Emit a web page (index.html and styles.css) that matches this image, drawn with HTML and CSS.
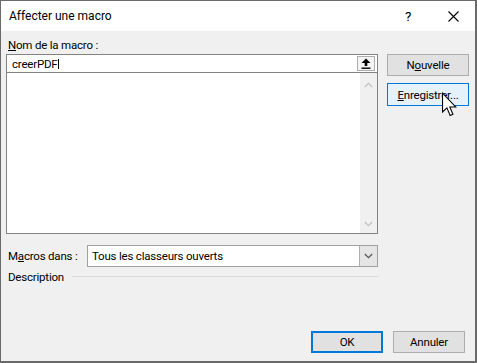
FILE: index.html
```html
<!DOCTYPE html>
<html lang="fr">
<head>
<meta charset="utf-8">
<title>Affecter une macro</title>
<link rel="stylesheet" href="styles.css">
</head>
<body>
<div class="window">
  <div class="titlebar">
    <span class="title">Affecter une macro</span>
    <span class="help">?</span>
    <span class="close">
      <svg width="11" height="11" viewBox="0 0 11 11"><path d="M0.5 0.5 L10.5 10.5 M10.5 0.5 L0.5 10.5" stroke="#000" stroke-width="1.1" fill="none"/></svg>
    </span>
  </div>
  <div class="content">
    <div class="main">
      <div class="left">
        <div class="label"><u>N</u>om de la macro :</div>
        <div class="namebox">
          <div class="input">
            <span class="value">creerPDF</span><span class="caret"></span>
            <span class="upbtn">
              <svg width="10" height="11" viewBox="0 0 10 11"><path d="M5 0.5 L9.5 5 L6.3 5 L6.3 8 L3.7 8 L3.7 5 L0.5 5 Z" fill="#000"/><rect x="0.5" y="9.5" width="9" height="1.4" fill="#000"/></svg>
            </span>
          </div>
          <div class="list">
            <div class="list-area"></div>
            <div class="vscroll">
              <svg width="9" height="6" viewBox="0 0 9 6"><path d="M0.8 5 L4.5 1.3 L8.2 5" stroke="#c2c2c2" stroke-width="1.3" fill="none"/></svg>
              <svg width="9" height="6" viewBox="0 0 9 6"><path d="M0.8 1 L4.5 4.7 L8.2 1" stroke="#c2c2c2" stroke-width="1.3" fill="none"/></svg>
            </div>
          </div>
        </div>
        <div class="macros-row">
          <span class="row-label">M<u>a</u>cros dans :</span>
          <div class="combo">
            <span class="combo-text">Tous les classeurs ouverts</span>
            <span class="drop">
              <svg width="9" height="6" viewBox="0 0 9 6"><path d="M0.8 1 L4.5 4.7 L8.2 1" stroke="#555" stroke-width="1.2" fill="none"/></svg>
            </span>
          </div>
        </div>
        <div class="desc-row">
          <span>Description</span><span class="rule"></span>
        </div>
      </div>
      <div class="right">
        <button class="btn side">N<u>o</u>uvelle</button>
        <button class="btn side hover"><u>E</u>nregistrer...</button>
      </div>
    </div>
    <div class="footer">
      <button class="btn foot default">OK</button>
      <button class="btn foot">Annuler</button>
    </div>
  </div>
  <svg class="cursor" width="15" height="26" viewBox="0 0 14 23">
    <path d="M0.5 0.5 L0.5 18 L4.6 14.2 L7.6 21.3 L10.2 20.2 L7.3 13.3 L12.8 13.3 Z" fill="#fff" stroke="#000" stroke-width="1" stroke-linejoin="miter"/>
  </svg>
</div>
</body>
</html>
```
FILE: styles.css
```css
* { box-sizing: border-box; }
html, body { margin: 0; padding: 0; }
body {
  font-family: Roboto, "Noto Sans", "Liberation Sans", sans-serif;
  font-size: 11.5px;
  letter-spacing: -0.2px;
  color: #000;
  background: #f0f0f0;
}
.window {
  position: relative;
  width: 477px;
  height: 363px;
  border-style: solid;
  border-color: #6a6a6a;
  border-width: 1px 2px 2px 1px;
  display: flex;
  flex-direction: column;
  background: #f0f0f0;
  overflow: hidden;
}
.titlebar {
  height: 30px;
  flex: none;
  background: #fff;
  display: flex;
  align-items: center;
  padding-left: 8px;
}
.title { flex: 1; font-size: 12px; letter-spacing: 0; }
.help { width: 43px; text-align: left; font-size: 13.5px; }
.close { width: 27px; display: flex; align-items: center; padding-top: 1px; }
.content {
  flex: 1;
  display: flex;
  flex-direction: column;
  padding: 6px 6px 8px 5px;
}
.main { display: flex; gap: 9px; }
.left { width: 372px; display: flex; flex-direction: column; }
.label { height: 17px; line-height: 16px; padding-left: 2px; }
.namebox {
  border: 1px solid #828282;
  background: #fff;
  height: 180px;
  display: flex;
  flex-direction: column;
}
.input {
  height: 18px;
  border-bottom: 1px solid #828282;
  display: flex;
  align-items: center;
  padding-left: 5px;
  position: relative;
}
.value { line-height: 16px; }
.caret { width: 1px; height: 10px; background: #000; margin-left: 1px; }
.upbtn {
  margin-left: auto;
  margin-right: 2px;
  width: 18px;
  height: 15px;
  border: 1px solid #adadad;
  background: #f4f4f4;
  display: flex;
  align-items: center;
  justify-content: center;
}
.list { flex: 1; display: flex; }
.list-area { flex: 1; }
.vscroll {
  width: 17px;
  background: #f0f0f0;
  display: flex;
  flex-direction: column;
  justify-content: space-between;
  align-items: center;
  padding: 9px 0 6px;
}
.macros-row {
  margin-top: 11px;
  display: flex;
  align-items: center;
}
.row-label { width: 81px; padding-left: 2px; }
.combo {
  flex: 1;
  height: 22px;
  border: 1px solid #a0a0a0;
  background: #fff;
  display: flex;
  align-items: center;
  padding-left: 4px;
}
.combo-text { flex: 1; }
.drop {
  width: 18px;
  height: 20px;
  background: #e5e5e5;
  border-left: 1px solid #adadad;
  display: flex;
  align-items: center;
  justify-content: center;
}
.desc-row {
  margin-top: 3px;
  height: 14px;
  display: flex;
  align-items: center;
  padding-left: 2px;
}
.rule { flex: 1; height: 1px; background: #d9d9d9; margin-left: 8px; margin-top: -2px; }
.right {
  width: 82px;
  padding-top: 17px;
  display: flex;
  flex-direction: column;
  gap: 7px;
}
.btn {
  font-family: inherit;
  font-size: 11.5px;
  letter-spacing: -0.2px;
  color: #000;
  background: #e1e1e1;
  border: 1px solid #adadad;
  padding: 0;
  margin: 0;
  line-height: 14px;
}
.side { height: 22px; width: 82px; }
.hover { background: #e5f1fb; border-color: #0078d7; height: 23px; }
.footer {
  margin-top: auto;
  display: flex;
  justify-content: flex-end;
  gap: 10px;
  padding-right: 4px;
}
.foot { width: 72px; height: 22px; }
.default { border: 2px solid #0078d7; }
.cursor { position: absolute; left: 441px; top: 91px; }
```
